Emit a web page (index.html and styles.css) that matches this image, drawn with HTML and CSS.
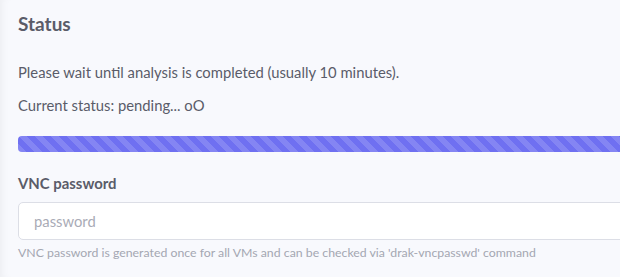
FILE: index.html
```html
<!DOCTYPE html>
<html>
<head>
<meta charset="utf-8">
<link rel="stylesheet" href="styles.css">
</head>
<body>
<div class="page">
  <h2 class="title">Status</h2>
  <p class="text">Please wait until analysis is completed (usually 10 minutes).</p>
  <p class="text">Current status: pending... oO</p>
  <div class="progress"><div class="bar"></div></div>
  <label class="label" for="vnc">VNC password</label>
  <input id="vnc" class="input" type="text" placeholder="password">
  <div class="help">VNC password is generated once for all VMs and can be checked via 'drak-vncpasswd' command</div>
</div>
</body>
</html>
```
FILE: styles.css
```css
html, body {
  margin: 0;
  padding: 0;
  height: 100%;
  overflow: hidden;
}
body {
  background: #f8f9fd;
  font-family: Lato, "Open Sans", sans-serif;
  color: #5a5c69;
}
.page {
  padding: 12px 0 0 18px;
  box-shadow: inset 8px 0 8px -6px rgba(0, 0, 0, 0.05);
  height: 100%;
  box-sizing: border-box;
  overflow: hidden;
}
.title {
  margin: 0 0 26px;
  font-size: 19px;
  font-weight: 700;
  line-height: 24px;
  color: #5a5c69;
}
.text {
  margin: 0 0 13px;
  font-size: 14.8px;
  line-height: 20px;
  color: #5a5c69;
}
.progress {
  margin-top: 21px;
  height: 16px;
  width: calc(100% + 10px);
  border-radius: 4px 0 0 4px;
  overflow: hidden;
  background: #eaecf4;
}
.bar {
  height: 100%;
  width: 100%;
  background-color: #6f70f1;
  background-image: linear-gradient(45deg, rgba(255,255,255,.15) 25%, transparent 25%, transparent 50%, rgba(255,255,255,.15) 50%, rgba(255,255,255,.15) 75%, transparent 75%, transparent);
  background-size: 16px 16px;
}
.label {
  display: block;
  margin-top: 21px;
  font-size: 14.9px;
  font-weight: 700;
  line-height: 20px;
  color: #5a5c69;
}
.input {
  display: block;
  margin-top: 9px;
  box-sizing: border-box;
  width: calc(100% + 10px);
  height: 38px;
  padding: 6px 15px;
  border: 1px solid #dcdee6;
  border-radius: 5px;
  background: #fff;
  font-family: inherit;
  font-size: 14.8px;
  color: #5a5c69;
  outline: none;
}
.input::placeholder {
  color: #a9abb6;
}
.help {
  margin-top: 5px;
  font-size: 12.3px;
  line-height: 16px;
  color: #a4a7b2;
}
```
